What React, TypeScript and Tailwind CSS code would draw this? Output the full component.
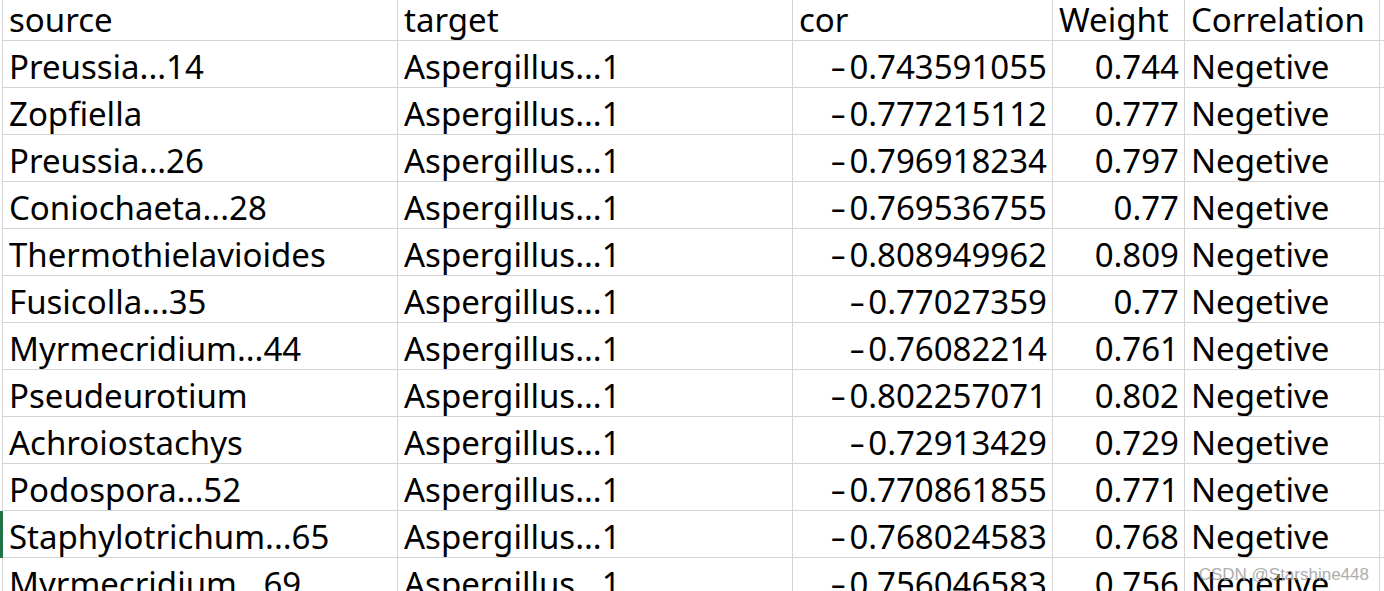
const rows: [string, string, string, string, string][] = [
    ["Preussia...14", "Aspergillus...1", "-0.743591055", "0.744", "Negetive"],
    ["Zopfiella", "Aspergillus...1", "-0.777215112", "0.777", "Negetive"],
    ["Preussia...26", "Aspergillus...1", "-0.796918234", "0.797", "Negetive"],
    ["Coniochaeta...28", "Aspergillus...1", "-0.769536755", "0.77", "Negetive"],
    ["Thermothielavioides", "Aspergillus...1", "-0.808949962", "0.809", "Negetive"],
    ["Fusicolla...35", "Aspergillus...1", "-0.77027359", "0.77", "Negetive"],
    ["Myrmecridium...44", "Aspergillus...1", "-0.76082214", "0.761", "Negetive"],
    ["Pseudeurotium", "Aspergillus...1", "-0.802257071", "0.802", "Negetive"],
    ["Achroiostachys", "Aspergillus...1", "-0.72913429", "0.729", "Negetive"],
    ["Podospora...52", "Aspergillus...1", "-0.770861855", "0.771", "Negetive"],
    ["Staphylotrichum...65", "Aspergillus...1", "-0.768024583", "0.768", "Negetive"],
    ["Myrmecridium...69", "Aspergillus...1", "-0.756046583", "0.756", "Negetive"],
];

const cell = "shrink-0 border-l border-b border-[#d4d4d4] flex items-end whitespace-nowrap";

// excel draws the minus wider than a plain hyphen
function Num({ v }: { v: string }) {
    if (!v.startsWith("-")) return <>{v}</>;
    return (
        <span>
            <span className="inline-block scale-x-[1.5] mr-[6px]">-</span>
            {v.slice(1)}
        </span>
    );
}

function Row({ data, header, selected }: { data: string[]; header?: boolean; selected?: boolean }) {
    const h = header ? "h-[41px]" : "h-[47px]";
    const num = header ? "pl-[6px]" : "justify-end pr-[5px]";
    return (
        <div className="flex relative">
            {selected && <div className="absolute left-[-2px] top-0 w-[3px] h-[47px] bg-[#217346]" />}
            <div className={`${cell} ${h} w-[395px] pl-[6px]`}>{data[0]}</div>
            <div className={`${cell} ${h} w-[395px] pl-[6px]`}>{data[1]}</div>
            <div className={`${cell} ${h} w-[260px] ${num}`}>
                {header ? data[2] : <Num v={data[2]} />}
            </div>
            <div className={`${cell} ${h} w-[132px] ${num}`}>{data[3]}</div>
            <div className={`${cell} ${h} w-[195px] pl-[6px]`}>{data[4]}</div>
            <div className={`${cell} ${h} w-[20px]`} />
        </div>
    );
}

export default function App() {
    return (
        <div
            className="relative w-[1384px] h-[591px] overflow-hidden bg-white pl-[2px] text-black text-[33px] leading-[40px]"
            style={{ fontFamily: '"Noto Sans", sans-serif' }}
        >
            <Row header data={["source", "target", "cor", "Weight", "Correlation"]} />
            {rows.map((r, i) => (
                <Row key={i} data={r} selected={i === 10} />
            ))}
            {/* watermark */}
            <div
                className="absolute right-[15px] bottom-[8px] text-[17px] leading-none text-[#9a9a9a] opacity-80"
                style={{ fontFamily: '"Liberation Sans", sans-serif' }}
            >
                CSDN @Starshine448
            </div>
        </div>
    );
}
